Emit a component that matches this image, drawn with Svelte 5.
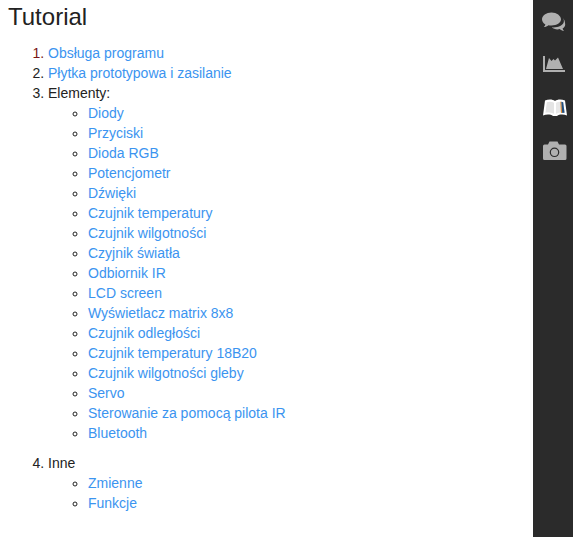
<script lang="ts">
	const elements = [
		'Diody',
		'Przyciski',
		'Dioda RGB',
		'Potencjometr',
		'Dźwięki',
		'Czujnik temperatury',
		'Czujnik wilgotności',
		'Czyjnik światła',
		'Odbiornik IR',
		'LCD screen',
		'Wyświetlacz matrix 8x8',
		'Czujnik odległości',
		'Czujnik temperatury 18B20',
		'Czujnik wilgotności gleby',
		'Servo',
		'Sterowanie za pomocą pilota IR',
		'Bluetooth'
	];
	const others = ['Zmienne', 'Funkcje'];
</script>

<div class="page">
	<main>
		<h3>Tutorial</h3>
		<ol>
			<li class="first"><a href="#a">Obsługa programu</a></li>
			<li><a href="#a">Płytka prototypowa i zasilanie</a></li>
			<li>
				Elementy:
				<ul>
					{#each elements as item}
						<li><a href="#a">{item}</a></li>
					{/each}
				</ul>
			</li>
			<li>
				Inne
				<ul>
					{#each others as item}
						<li><a href="#a">{item}</a></li>
					{/each}
				</ul>
			</li>
		</ol>
	</main>
	<nav>
		<svg class="icon" width="26" height="24" viewBox="0 0 26 24">
			<path d="M10.500 2.500C5.300 2.500 1 5.500 1 9.300c0 2.200 1.400 4 3.400 5.200-.3 1-.9 1.900-1.600 2.600 1.800-.1 3.400-.8 4.600-1.900 1 .2 2 .3 3.100.3 5.200 0 9.500-2.800 9.500-6.200s-4.300-6.800-9.500-6.800z" />
			<path d="M21.800 7.800c.8 1 1.100 2.200 1.100 3.200 0 4.200-5.200 6.400-10.500 6.400-.5 0-1 0-1.500-.1 1.300 1.300 3.300 2.100 5.600 2.100.8 0 1.600-.1 2.300-.3 1 1 2.400 1.700 4.200 1.900-.7-.7-1.200-1.500-1.400-2.400 1.600-1 2.600-2.500 2.600-4.200 0-2.700-1-5.100-2.400-6.600z" />
		</svg>
		<svg class="icon" width="26" height="24" viewBox="0 0 26 24">
			<path d="M2 3h2v14h20v2H2z" />
			<path d="M5 16l3-11 2.500 3 2-2 1.500 1.500 3-3 5 11.500z" />
		</svg>
		<svg class="icon" width="26" height="24" viewBox="0 0 26 24">
			<path d="M2 19.500 4 4.500C7.500 3 11.500 3 14 5c2.500-2 6.500-2 10-.5l2 15c-3.500-1.300-7.500-1.300-10 .5h-4c-2.500-1.800-6.500-1.800-10-.5z" fill="#fff" />
			<path d="M5.800 6.300 4.400 16.800c2.700-.7 5.800-.4 8.600 1V6.800C10.800 5.500 8 5.500 5.800 6.300z" fill="#e4e4e4" />
			<path d="M15 6.800v11c2.800-1.400 5.900-1.700 8.600-1L22.200 6.300C20 5.500 17.200 5.500 15 6.800z" fill="#e8e8e8" />
			<path d="M19.300 5.700 20.300 5.800l.9 11-1.200.1z" fill="#e08a2c" />
			<path d="M20.300 5.800 22.200 6.300l1.400 10.500-2.400.1z" fill="#24507f" />
		</svg>
		<svg class="icon" width="26" height="24" viewBox="0 0 26 24">
			<path fill-rule="evenodd" d="M8.500 2.500h8l1.500 3h6a1.500 1.500 0 0 1 1.500 1.500v12.500a1.500 1.500 0 0 1-1.500 1.500H3.500A1.500 1.500 0 0 1 2 19.500V7a1.500 1.500 0 0 1 1.500-1.500H7zM13.500 8.500a4.800 4.800 0 1 0 0 9.600 4.800 4.800 0 0 0 0-9.600zm0 1.200a3.600 3.600 0 1 1 0 7.200 3.600 3.600 0 0 1 0-7.200z" />
		</svg>
	</nav>
</div>

<style>
	:global(body) {
		margin: 0;
		font-family: 'Liberation Sans', Arial, sans-serif;
		font-size: 14px;
		line-height: 20px;
		color: #222;
		background: #fff;
	}

	.page {
		display: flex;
		min-height: 537px;
	}

	main {
		flex: 1;
		padding: 0 8px;
	}

	h3 {
		margin: 0 0 10px;
		padding-top: 4px;
		font-size: 24px;
		font-weight: 500;
		line-height: 26px;
	}

	ol {
		margin: 0;
		padding-left: 40px;
		margin-top: 13px;
	}

	ul {
		margin: 0 0 10px;
		padding-left: 40px;
	}

	.first::marker {
		color: #7a1515;
	}

	a {
		color: #3b94f0;
		text-decoration: none;
	}

	nav {
		width: 40px;
		background: #2b2b2b;
		display: flex;
		flex-direction: column;
		align-items: center;
		gap: 19px;
		padding: 10px 0 0 2px;
		box-sizing: border-box;
	}

	.icon {
		display: block;
		fill: #b0b0b0;
	}
</style>
